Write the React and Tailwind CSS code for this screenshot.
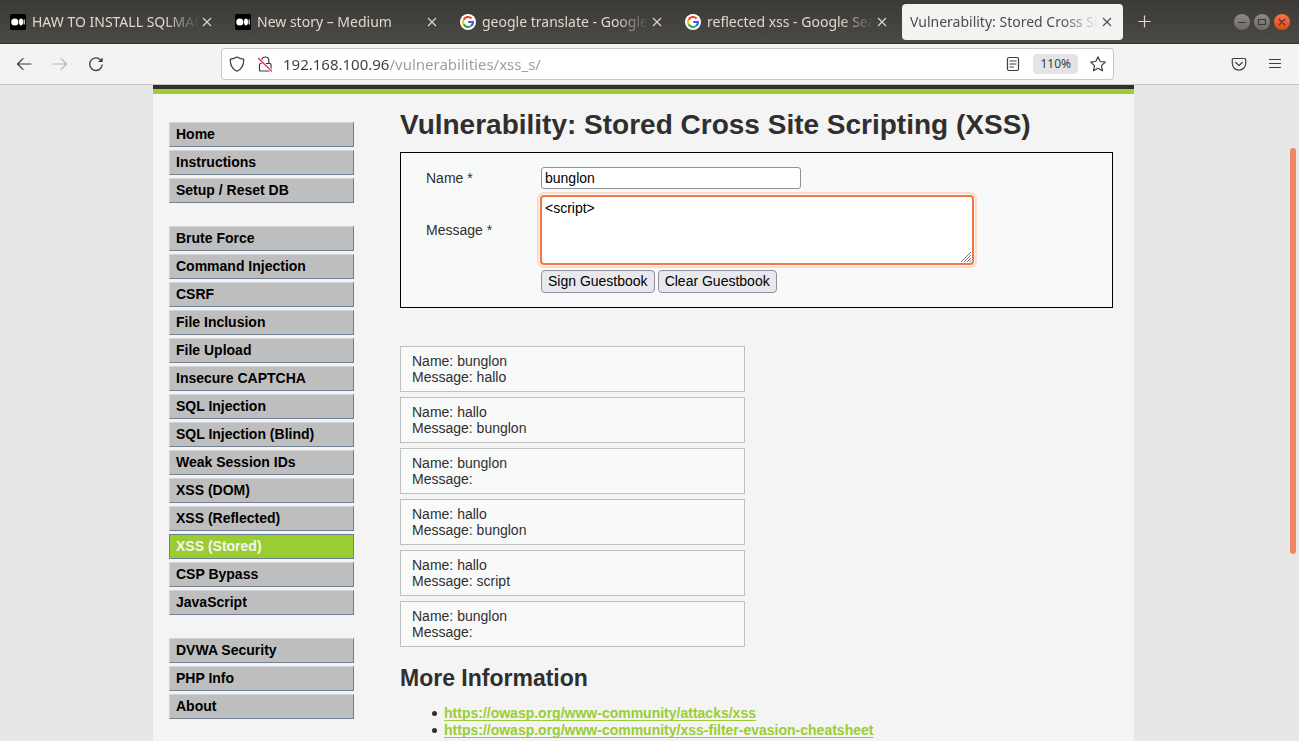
import { useState } from 'react'

const menuGroups = [
  ['Home', 'Instructions', 'Setup / Reset DB'],
  [
    'Brute Force',
    'Command Injection',
    'CSRF',
    'File Inclusion',
    'File Upload',
    'Insecure CAPTCHA',
    'SQL Injection',
    'SQL Injection (Blind)',
    'Weak Session IDs',
    'XSS (DOM)',
    'XSS (Reflected)',
    'XSS (Stored)',
    'CSP Bypass',
    'JavaScript',
  ],
  ['DVWA Security', 'PHP Info', 'About'],
]

const entries = [
  { name: 'bunglon', message: 'hallo' },
  { name: 'hallo', message: 'bunglon' },
  { name: 'bunglon', message: '' },
  { name: 'hallo', message: 'bunglon' },
  { name: 'hallo', message: 'script' },
  { name: 'bunglon', message: '' },
]

const links = [
  'https://owasp.org/www-community/attacks/xss',
  'https://owasp.org/www-community/xss-filter-evasion-cheatsheet',
  'https://en.wikipedia.org/wiki/Cross-site_scripting',
]

const tabs = [
  { title: 'HAW TO INSTALL SQLMAP', icon: 'medium' },
  { title: 'New story – Medium', icon: 'medium' },
  { title: 'geogle translate - Google Search', icon: 'google' },
  { title: 'reflected xss - Google Search', icon: 'google' },
  { title: 'Vulnerability: Stored Cross Site Scripting', active: true },
]

const MediumIcon = () => (
  <svg width="16" height="16" viewBox="0 0 16 16" className="shrink-0">
    <rect width="16" height="16" rx="1.5" fill="#000" />
    <circle cx="4.8" cy="8" r="3.6" fill="#fff" />
    <ellipse cx="11" cy="8" rx="2" ry="3.4" fill="#fff" />
    <ellipse cx="14.2" cy="8" rx="0.8" ry="3" fill="#ccc" />
  </svg>
)

const GoogleIcon = () => (
  <svg width="16" height="16" viewBox="0 0 16 16" className="shrink-0">
    <circle cx="8" cy="8" r="8" fill="#fff" />
    <g fill="none" strokeWidth="2.1">
      <path d="M11.6 4.4A5 5 0 0 0 3.6 5.7" stroke="#ea4335" />
      <path d="M3.6 5.7a5 5 0 0 0 0 4.6" stroke="#fbbc05" />
      <path d="M3.6 10.3a5 5 0 0 0 7.6 1.5" stroke="#34a853" />
      <path d="M11.2 11.8A4.8 4.8 0 0 0 13 8H8.2" stroke="#4056f4" />
    </g>
  </svg>
)

const CloseIcon = () => (
  <svg width="10" height="10" viewBox="0 0 10 10" fill="none" stroke="currentColor" strokeWidth="1.1">
    <path d="M1 1l8 8M9 1L1 9" />
  </svg>
)

const Icon = ({ children, className = '' }) => (
  <svg
    width="16"
    height="16"
    viewBox="0 0 16 16"
    fill="none"
    stroke="currentColor"
    strokeWidth="1.2"
    strokeLinecap="round"
    strokeLinejoin="round"
    className={`shrink-0 ${className}`}
  >
    {children}
  </svg>
)

const Tab = ({ tab }) => (
  <div
    className={`flex h-9 w-[221px] shrink-0 items-center rounded-sm px-2 ${tab.active ? 'bg-[#f4f3f2] text-[#4c4c4c]' : 'text-[#dfdbd2]'}`}
  >
    {tab.icon === 'medium' && <MediumIcon />}
    {tab.icon === 'google' && <GoogleIcon />}
    <span
      className={`flex-1 overflow-hidden text-[14px] leading-5 whitespace-nowrap mask-r-from-80% mask-r-to-100% ${tab.icon ? 'ml-[6px]' : ''}`}
    >
      {tab.title}
    </span>
    <button type="button" aria-label="Close tab" className="flex w-4 justify-center">
      <CloseIcon />
    </button>
  </div>
)

const TabStrip = () => (
  <div className="flex h-11 shrink-0 items-center border-b border-[#33322e] bg-linear-to-b from-[#3b3a36] to-[#4a4943]">
    <div className="flex min-w-0 flex-1 items-center gap-1 pl-[2px]">
      {tabs.map((tab) => (
        <Tab key={tab.title} tab={tab} />
      ))}
      <button type="button" aria-label="New tab" className="ml-[11px] text-[#dfdbd2]">
        <svg width="13" height="13" viewBox="0 0 13 13" stroke="currentColor" strokeWidth="1.2">
          <path d="M6.5 0.5v12M0.5 6.5h12" />
        </svg>
      </button>
    </div>
    <div className="flex gap-1 pr-[9px] text-[#3a3935]">
      <button type="button" aria-label="Minimize" className="size-4 rounded-full bg-linear-to-b from-[#8c8a83] to-[#6e6c66]">
        <Icon><path d="M4.5 8.5h7" /></Icon>
      </button>
      <button type="button" aria-label="Maximize" className="size-4 rounded-full bg-linear-to-b from-[#8c8a83] to-[#6e6c66]">
        <Icon><path d="M4.5 5.5h7v5h-7z" /></Icon>
      </button>
      <button type="button" aria-label="Close" className="size-4 rounded-full bg-linear-to-b from-[#f4744c] to-[#dd4814]">
        <Icon><path d="M5.2 5.2l5.6 5.6M10.8 5.2l-5.6 5.6" /></Icon>
      </button>
    </div>
  </div>
)

const Toolbar = () => (
  <div className="flex h-[41px] shrink-0 items-center border-b border-[#c8c6c3] bg-[#f4f3f2] text-[#3d3d3d]">
    <div className="flex w-[221px] items-center gap-5 pl-4">
      <button type="button" aria-label="Back">
        <Icon><path d="M1.5 8h13.5M7 2.6L1.5 8 7 13.4" /></Icon>
      </button>
      <button type="button" aria-label="Forward" className="text-[#b4b3b2]">
        <Icon><path d="M1 8h13.5M9 2.6L14.5 8 9 13.4" /></Icon>
      </button>
      <button type="button" aria-label="Reload">
        <Icon>
          <path d="M14.2 9a6.3 6.3 0 1 1-1.6-5.1l1.2 1.3" strokeWidth="1.3" />
          <path d="M14.6 1.5v4.6H10z" fill="currentColor" stroke="none" />
        </Icon>
      </button>
    </div>
    <div className="flex h-8 flex-1 items-center rounded-sm border border-[#c8c6c3] bg-white pr-[7px] pl-[7px]">
      <Icon>
        <path d="M8 1C6 2.3 3.6 2.9 1.3 3.2c-.2 5.5 1.2 9.6 6.7 12 5.5-2.4 6.9-6.5 6.7-12C12.4 2.9 10 2.3 8 1z" />
      </Icon>
      <Icon className="ml-3">
        <path d="M3.5 7.5h9.5a1 1 0 0 1 1 1v5.5a1 1 0 0 1-1 1H3.5a1 1 0 0 1-1-1V8.5a1 1 0 0 1 1-1zM4.8 7.3V4.5a3.5 3.5 0 0 1 7 0v2.8" />
        <path d="M1.5 2.5l13 12.5" stroke="#fff" strokeWidth="3" />
        <path d="M1.5 2.5l13 12.5" stroke="#e22850" />
      </Icon>
      <input
        type="text"
        aria-label="Address"
        defaultValue="192.168.100.96/vulnerabilities/xss_s/"
        className="ml-[10px] min-w-0 flex-1 bg-linear-to-r from-[#3d3d3d] from-[107px] to-[#9a9a9a] to-[107px] bg-clip-text text-[15px] text-transparent outline-none"
      />
      <button type="button" aria-label="Reader view">
        <Icon>
          <rect x="2.5" y="1.5" width="11" height="13" rx="1.5" />
          <path d="M5 5h6M5 8h6M5 11h3.5" />
        </Icon>
      </button>
      <button type="button" className="ml-3 h-5 rounded-sm bg-[#e4e4e4] px-[7px] text-[12px]">
        110%
      </button>
      <button type="button" aria-label="Bookmark" className="ml-3">
        <Icon>
          <path d="M8 .8l2.2 4.7 5.1.6-3.8 3.5 1 5.2L8 12.3l-4.5 2.5 1-5.2L.7 6.1l5.1-.6z" />
        </Icon>
      </button>
    </div>
    <div className="flex w-[185px] items-center justify-end gap-5 pr-4">
      <button type="button" aria-label="Pocket">
        <Icon>
          <path d="M2.5 2.5h11a1.2 1.2 0 0 1 1.2 1.2v3.8a6.7 6.7 0 0 1-13.4 0V3.7a1.2 1.2 0 0 1 1.2-1.2zM4.8 6.5L8 9.7l3.2-3.2" />
        </Icon>
      </button>
      <button type="button" aria-label="Menu">
        <Icon><path d="M2.5 3.5h11M2.5 7.5h11M2.5 11.5h11" /></Icon>
      </button>
    </div>
  </div>
)

const Menu = () => (
  <nav className="flex w-[185px] shrink-0 flex-col gap-[23px]">
    {menuGroups.map((group) => (
      <ul key={group[0]} className="flex flex-col gap-[3px]">
        {group.map((item) => (
          <li key={item}>
            <a
              href="#"
              className={`block h-[25px] border pl-[6px] leading-[23px] font-bold ${
                item === 'XSS (Stored)'
                  ? 'border-[#708090] bg-[#9acd32] text-[#f4f4f4]'
                  : 'border-t-[#d3d3d3] border-r-[#708090] border-b-[#708090] border-l-[#d3d3d3] bg-[#bebebe] text-black'
              }`}
            >
              {item}
            </a>
          </li>
        ))}
      </ul>
    ))}
  </nav>
)

const GuestbookForm = () => {
  const [name, setName] = useState('bunglon')
  const [message, setMessage] = useState('<script>')

  return (
    <form
      className="border border-black bg-[#f8fafa] py-[14px] pl-[25px]"
      onSubmit={(e) => e.preventDefault()}
    >
      <div className="flex items-center">
        <label htmlFor="name" className="w-[115px]">Name *</label>
        <input
          id="name"
          type="text"
          value={name}
          onChange={(e) => setName(e.target.value)}
          className="h-[22px] w-[260px] rounded-[3px] border border-[#8f8f9d] bg-white px-[3px] text-black"
        />
      </div>
      <div className="mt-[6px] flex items-center">
        <label htmlFor="message" className="w-[114px]">Message *</label>
        <div className="relative flex">
          <textarea
            id="message"
            value={message}
            onChange={(e) => setMessage(e.target.value)}
            className="h-[70px] w-[434px] resize-none rounded-[4px] border-2 border-[#f07746] bg-white px-[3px] py-[3px] leading-[17px] text-black ring-2 ring-[#fbdccd] ring-offset-1 ring-offset-[#fdf6f2] outline-none"
          />
          {/* resize grip */}
          <svg
            width="10"
            height="10"
            viewBox="0 0 10 10"
            stroke="#777"
            className="pointer-events-none absolute right-[3px] bottom-[3px]"
          >
            <path d="M0 10L10 0M3 10l7-7M6 10l4-4M8.5 10L10 8.5" />
          </svg>
        </div>
      </div>
      <div className="mt-[5px] ml-[115px] flex gap-[3px] text-black">
        <button type="submit" className="h-[23px] rounded-[4px] border border-[#8f8f9d] bg-[#e9e9ed] px-[6px]">
          Sign Guestbook
        </button>
        <button
          type="button"
          className="h-[23px] rounded-[4px] border border-[#8f8f9d] bg-[#e9e9ed] px-[6px]"
          onClick={() => {
            setName('')
            setMessage('')
          }}
        >
          Clear Guestbook
        </button>
      </div>
    </form>
  )
}

const App = () => {
  return (
    <div className="flex h-screen flex-col overflow-hidden font-['Noto_Sans',sans-serif]">
      <TabStrip />
      <Toolbar />
      <div className="flex min-h-0 flex-1 bg-[#e7e7e7] font-['Liberation_Sans',Arial,sans-serif] text-[14px] text-[#2f2f2f]">
        <div className="flex min-w-0 flex-1 justify-center overflow-hidden">
          <div className="w-[981px] bg-[#f4f4f4]">
            <div className="h-[9px] border-b-5 border-[#a1cc33] bg-[#2f2f2f]" />
            <div className="flex gap-[46px] pr-[21px] pl-4">
              <div className="pt-7">
                <Menu />
              </div>
              <main className="min-w-0 flex-1 pt-[15px]">
                <h1 className="mb-[11px] text-[28px] leading-8 font-bold">
                  Vulnerability: Stored Cross Site Scripting (XSS)
                </h1>
                <GuestbookForm />
                <div className="mt-[38px] flex w-[345px] flex-col gap-[5px]">
                  {entries.map((entry, i) => (
                    <div key={i} className="border border-[#c0c0c0] bg-[#f8fafa] px-[11px] py-[6px] leading-4">
                      Name: {entry.name}
                      <br />
                      Message: {entry.message}
                    </div>
                  ))}
                </div>
                <h2 className="mt-[17px] text-[23px] leading-7 font-bold">More Information</h2>
                <ul className="mt-[13px] pl-8 leading-[17px]">
                  {links.map((link) => (
                    <li
                      key={link}
                      className="flex items-center gap-[7px] before:size-[5px] before:rounded-full before:bg-[#2f2f2f]"
                    >
                      <a href={link} className="font-bold text-[#9acd32] underline decoration-1 underline-offset-2 [text-decoration-skip-ink:none]">
                        {link}
                      </a>
                    </li>
                  ))}
                </ul>
              </main>
            </div>
          </div>
        </div>
        <div className="w-3 shrink-0 pt-[63px] pl-[3px]">
          <div className="h-[406px] w-[6px] rounded-full bg-[#f08763]" />
        </div>
      </div>
    </div>
  )
}

export default App
